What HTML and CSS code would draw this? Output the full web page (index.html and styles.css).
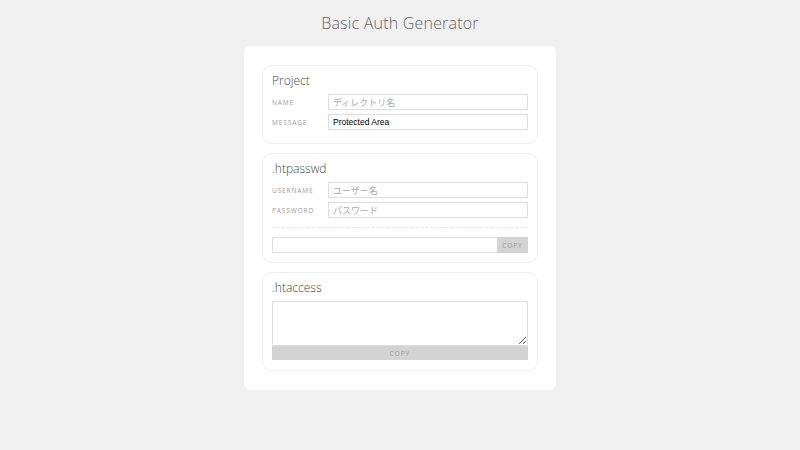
FILE: index.html
```html
<!DOCTYPE html>
<html lang="ja">
<head>
<meta charset="utf-8">
<title>Basic Auth Generator</title>
<link rel="stylesheet" href="styles.css">
</head>
<body>
<h1 class="title">Basic Auth Generator</h1>
<main class="card">
  <section class="panel">
    <h2 class="panel-title">Project</h2>
    <div class="row">
      <label class="label">NAME</label>
      <input class="field" type="text" placeholder="ディレクトリ名">
    </div>
    <div class="row row-end">
      <label class="label">MESSAGE</label>
      <input class="field filled" type="text" value="Protected Area">
    </div>
  </section>
  <section class="panel">
    <h2 class="panel-title">.htpasswd</h2>
    <div class="row">
      <label class="label">USERNAME</label>
      <input class="field" type="text" placeholder="ユーザー名">
    </div>
    <div class="row">
      <label class="label">PASSWORD</label>
      <input class="field" type="text" placeholder="パスワード">
    </div>
    <hr class="divider">
    <div class="copy-row">
      <input class="field output" type="text">
      <button class="copy-btn">COPY</button>
    </div>
  </section>
  <section class="panel">
    <h2 class="panel-title">.htaccess</h2>
    <textarea class="area"></textarea>
    <button class="copy-wide">COPY</button>
  </section>
</main>
</body>
</html>
```

FILE: styles.css
```css
* { box-sizing: border-box; }
html, body { margin: 0; padding: 0; }
body {
  background: #f0f0f0;
  font-family: "Open Sans", "Noto Sans CJK JP", sans-serif;
  color: #555;
  height: 450px;
  overflow: hidden;
}
.title {
  margin: 0;
  padding-top: 11px;
  height: 46px;
  text-align: center;
  font-weight: 300;
  font-size: 16px;
  line-height: 24px;
  color: #666;
  letter-spacing: 0.2px;
}
.card {
  width: 312px;
  margin: 0 auto;
  background: #fff;
  border-radius: 7px;
  padding: 19px 18px;
  display: flex;
  flex-direction: column;
  gap: 9px;
}
.panel {
  border: 1px solid #eee;
  border-radius: 10px;
  padding: 6px 9px 9px;
  display: flex;
  flex-direction: column;
}
.panel-title {
  margin: 0 0 5px;
  font-size: 12px;
  font-weight: 300;
  line-height: 17px;
  color: #444;
}
.row {
  display: flex;
  align-items: center;
  height: 16px;
  margin-bottom: 4px;
}
.row-end { margin-bottom: 4px; }
.label {
  width: 56px;
  font-size: 6.5px;
  letter-spacing: 0.9px;
  color: #999;
}
.field {
  flex: 1;
  height: 16px;
  border: 1px solid #ddd;
  background: #fff;
  padding: 0 4px;
  font-size: 9px;
  font-family: "Open Sans", "Noto Sans CJK JP", sans-serif;
  outline: none;
}
.field::placeholder { color: #aaa; }
.field.filled {
  font-family: "Liberation Sans", Arial, sans-serif;
  font-size: 8.5px;
  color: #000;
}
.divider {
  border: 0;
  border-top: 1px dashed #e4e4e4;
  margin: 5px 0 9px;
}
.copy-row {
  display: flex;
  height: 16px;
}
.output { border-right: 0; }
.copy-btn {
  width: 31px;
  border: 0;
  background: #d3d3d3;
  color: #999;
  font-size: 6.5px;
  letter-spacing: 0.9px;
  font-family: "Open Sans", sans-serif;
  padding: 0;
}
.area {
  display: block;
  width: 100%;
  height: 45px;
  border: 1px solid #ddd;
  resize: vertical;
  margin: 0;
}
.copy-wide {
  height: 14px;
  border: 0;
  background: #d3d3d3;
  color: #999;
  font-size: 6.5px;
  letter-spacing: 0.9px;
  font-family: "Open Sans", sans-serif;
  padding: 0;
  margin-bottom: 1px;
}
```
